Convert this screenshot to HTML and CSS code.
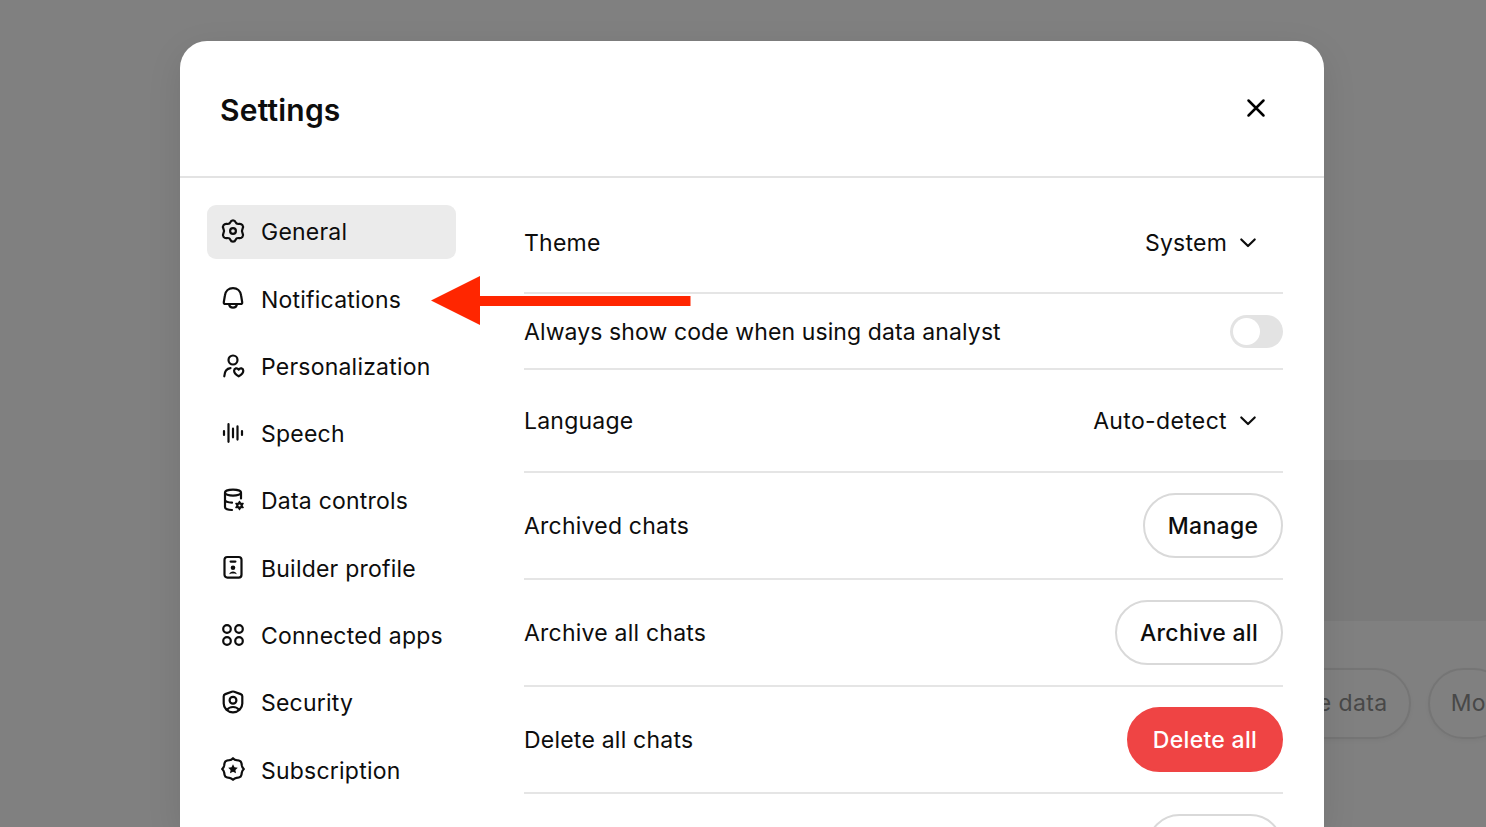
FILE: index.html
```html
<!DOCTYPE html>
<html lang="en">
<head>
  <meta charset="utf-8">
  <title>Settings</title>
  <link rel="stylesheet" href="styles.css">
</head>
<body>
  <!-- page behind the dialog -->
  <div class="page">
    <div class="composer"></div>
    <div class="suggestions">
      <div class="pill">Analyze data</div>
      <div class="pill">Mo</div>
    </div>
  </div>

  <div class="modal">
    <div class="modal-header">
      <h2>Settings</h2>
      <button class="close" aria-label="Close">
        <svg width="20" height="20" viewBox="0 0 20 20"><path d="M2.5 2.5l15 15M17.5 2.5l-15 15"/></svg>
      </button>
    </div>

    <div class="modal-body">
      <nav class="sidebar">
        <a class="item active">
          <svg viewBox="0 0 26 26"><path d="M10.4 4.2C11.3 1.8 14.7 1.8 15.6 4.2C16.2 5.6 17.5 6.2 19 5.9C22 5.4 24 8.2 22.6 10.6C21.7 12.2 21.7 13.8 22.6 15.4C24 17.8 22 20.6 19 20.1C17.5 19.8 16.2 20.4 15.6 21.8C14.7 24.2 11.3 24.2 10.4 21.8C9.8 20.4 8.5 19.8 7 20.1C4 20.6 2 17.8 3.4 15.4C4.3 13.8 4.3 12.2 3.4 10.6C2 8.2 4 5.4 7 5.9C8.5 6.2 9.8 5.6 10.4 4.2Z"/><circle cx="13" cy="13" r="2.9"/></svg>
          <span>General</span>
        </a>
        <a class="item">
          <svg viewBox="0 0 26 26"><path d="M4.9 10.5C5.5 6 8.8 3.1 13 3.1S20.5 6 21.1 10.5L22.2 17.1Q22.5 19 20.6 19H5.4Q3.5 19 3.8 17.1ZM9 19C9.7 23.9 16.3 23.9 17 19"/></svg>
          <span>Notifications</span>
        </a>
        <a class="item">
          <svg viewBox="0 0 26 26"><circle cx="13" cy="7" r="4.5"/><path d="M4.3 23.3C4.5 18.5 6.7 15.5 10.5 15.1M18.7 23.3C16 21.8 14.1 20 14.1 17.8C14.1 15.2 17.2 14.4 18.7 16.6C20.2 14.4 23.3 15.2 23.3 17.8C23.3 20 21.4 21.8 18.7 23.3Z"/></svg>
          <span>Personalization</span>
        </a>
        <a class="item">
          <svg viewBox="0 0 26 26"><path d="M4 11v4M8.5 4.2v17.6M13 8.7v8.6M17.5 6.4v13.2M22 11v4"/></svg>
          <span>Speech</span>
        </a>
        <a class="item">
          <svg viewBox="0 0 26 26"><ellipse cx="13" cy="5.7" rx="8" ry="3"/><path d="M5 5.7V20C5 21.7 7.8 22.9 12 23M21 5.7V11.5M5 13C5.5 14.5 8.3 15.5 12 15.6"/><path class="cog" d="M19.5 14.3l1.2 2.1h2.5l-1.2 2.1 1.2 2.1h-2.5l-1.2 2.1-1.2-2.1h-2.5l1.2-2.1-1.2-2.1h2.5z"/><circle class="hole" cx="19.5" cy="18.5" r="1.1"/></svg>
          <span>Data controls</span>
        </a>
        <a class="item">
          <svg viewBox="0 0 26 26"><rect x="4.5" y="3" width="17" height="20.6" rx="2.8"/><path d="M10.6 7.6h4.8"/><circle class="solid" cx="13" cy="13.8" r="2.3"/><path class="solid" d="M9.3 20.3C9.9 16.7 16.1 16.7 16.7 20.3L14.8 19.5H11.2Z"/></svg>
          <span>Builder profile</span>
        </a>
        <a class="item">
          <svg viewBox="0 0 26 26"><circle cx="7" cy="7" r="3.8"/><circle cx="19" cy="7" r="3.8"/><circle cx="7" cy="19" r="3.8"/><circle cx="19" cy="19" r="3.8"/></svg>
          <span>Connected apps</span>
        </a>
        <a class="item">
          <svg viewBox="0 0 26 26"><path d="M11.8 2.7Q13 2.3 14.2 2.7L20.7 5.1Q22.3 5.7 22.3 7.3V14.5C22.3 19.4 18.3 23.3 13 23.3S3.7 19.4 3.7 14.5V7.3Q3.7 5.7 5.3 5.1ZM7 21C9.5 17 16.5 17 19 21"/><circle cx="13" cy="11.2" r="3.4"/></svg>
          <span>Security</span>
        </a>
        <a class="item">
          <svg viewBox="0 0 26 26"><path d="M13 2.2Q14.7 4 16.6 4.2Q19 4.3 20.6 5.4Q21.7 7 21.8 9.4Q22 11.3 23.8 13Q22 14.7 21.8 16.6Q21.7 19 20.6 20.6Q19 21.7 16.6 21.8Q14.7 22 13 23.8Q11.3 22 9.4 21.8Q7 21.7 5.4 20.6Q4.3 19 4.2 16.6Q4 14.7 2.2 13Q4 11.3 4.2 9.4Q4.3 7 5.4 5.4Q7 4.3 9.4 4.2Q11.3 4 13 2.2Z"/><path class="solid" d="M13 8.2l1.5 3 3.3.5-2.4 2.3.6 3.3-3-1.6-3 1.6.6-3.3-2.4-2.3 3.3-.5z"/></svg>
          <span>Subscription</span>
        </a>
      </nav>

      <div class="content">
        <div class="row tall first">
          <span>Theme</span>
          <div class="select"><span>System</span>
            <svg width="18" height="12" viewBox="0 0 18 12"><path d="M2.3 2.5L9 9L15.7 2.5"/></svg>
          </div>
        </div>
        <div class="row short">
          <span class="analyst">Always show code when using data analyst</span>
          <div class="toggle"><div class="knob"></div></div>
        </div>
        <div class="row tall">
          <span>Language</span>
          <div class="select"><span class="auto">Auto-detect</span>
            <svg width="18" height="12" viewBox="0 0 18 12"><path d="M2.3 2.5L9 9L15.7 2.5"/></svg>
          </div>
        </div>
        <div class="row">
          <span>Archived chats</span>
          <button class="btn manage">Manage</button>
        </div>
        <div class="row">
          <span>Archive all chats</span>
          <button class="btn archive">Archive all</button>
        </div>
        <div class="row">
          <span>Delete all chats</span>
          <button class="btn danger">Delete all</button>
        </div>
        <div class="row">
          <span></span>
          <button class="btn last"></button>
        </div>
      </div>
    </div>
  </div>

  <svg class="arrow" width="260" height="49" viewBox="0 0 260 49"><path d="M0 24.5L49 0V20H259.5V30H49V49Z"/></svg>
</body>
</html>
```

FILE: styles.css
```css
* {
  box-sizing: border-box;
}

body {
  margin: 0;
  height: 827px;
  overflow: hidden;
  position: relative;
  background-color: #808080;
  font-family: Inter, sans-serif;
  font-size: 23px;
  letter-spacing: 0.22px;
  color: #0d0d0d;
}

/* Page behind the dialog */
.page {
  padding-top: 460px;
}

.composer {
  height: 161px;
  margin-left: 743px;
  background-color: #7a7a7a;
}

.suggestions {
  display: flex;
  justify-content: flex-end;
  gap: 17px;
  margin-top: 47px;
  margin-right: -23px;
}

.pill {
  height: 71px;
  line-height: 67px;
  padding: 0 21px;
  border: 2px solid #757575;
  border-radius: 36px;
  color: #484848;
  letter-spacing: 0.4px;
  box-shadow: 0 2px 4px rgba(0, 0, 0, 0.04);
}

/* Dialog */
.modal {
  position: absolute;
  top: 41px;
  left: 180px;
  width: 1144px;
  height: 786px;
  overflow: hidden;
  background-color: #fff;
  border-radius: 27px 27px 0 0;
  box-shadow: 0 10px 34px rgba(0, 0, 0, 0.1);
}

.modal-header {
  display: flex;
  align-items: center;
  justify-content: space-between;
  height: 137px;
  padding: 0 58px 0 40px;
  border-bottom: 2px solid #e3e3e3;
}

.modal-header h2 {
  margin: 2px 0 0;
  font-size: 30px;
  font-weight: 600;
  letter-spacing: 0.2px;
}

.close {
  display: flex;
  padding: 0 0 2px;
  border: none;
  background: none;
}

svg {
  fill: none;
  stroke: #0d0d0d;
  stroke-width: 2.2;
  stroke-linecap: round;
  stroke-linejoin: round;
}

.close svg {
  stroke: #000;
  stroke-width: 2.5;
}

.modal-body {
  display: flex;
}

.sidebar {
  display: flex;
  flex-direction: column;
  gap: 13.3px;
  width: 249px;
  margin: 27px 68px 0 27px;
}

.item {
  display: flex;
  align-items: center;
  gap: 15px;
  height: 54px;
  padding-left: 13px;
  border-radius: 9px;
  white-space: nowrap;
}

.item span {
  padding-top: 0.6px;
}

.item svg {
  width: 26px;
  height: 26px;
  flex: none;
  margin-top: -2px;
}

.item.active {
  background-color: #ebebeb;
}

.item .solid {
  fill: #0d0d0d;
  stroke: none;
}

.item .cog {
  fill: #0d0d0d;
  stroke-width: 1.2;
}

.item .hole {
  fill: #fff;
  stroke: none;
}

.content {
  width: 759px;
}

.row {
  display: flex;
  align-items: center;
  justify-content: space-between;
  height: 107px;
  border-bottom: 2px solid #e5e5e5;
}

.row.tall {
  height: 103px;
}

.row.first {
  height: 102px;
  margin-top: 14px;
  padding-top: 2px;
}

.row.short {
  height: 76px;
}

.row.short span {
  padding-top: 1px;
}

.analyst {
  letter-spacing: 0.1px;
}

.select {
  display: flex;
  align-items: center;
  gap: 12px;
  padding-right: 26px;
}

.auto {
  letter-spacing: 0.35px;
}

.toggle {
  width: 53px;
  height: 33px;
  padding: 3px;
  border-radius: 17px;
  background-color: #e3e3e3;
}

.knob {
  width: 27px;
  height: 27px;
  border-radius: 50%;
  background-color: #fff;
}

.btn {
  height: 65px;
  padding: 0;
  border: 2px solid #d9d9d9;
  border-radius: 33px;
  background-color: #fff;
  font-family: inherit;
  font-size: 23px;
  font-weight: 500;
  letter-spacing: 0.3px;
  color: #0d0d0d;
}

.manage {
  width: 140px;
}

.archive {
  width: 168px;
}

.danger {
  width: 156px;
  border-color: #ef4444;
  background-color: #ef4444;
  color: #fff;
}

.last {
  width: 136px;
}

/* Pointer to the Notifications item */
.arrow {
  position: absolute;
  top: 276px;
  left: 431px;
  fill: #ff2600;
  stroke: none;
}
```
